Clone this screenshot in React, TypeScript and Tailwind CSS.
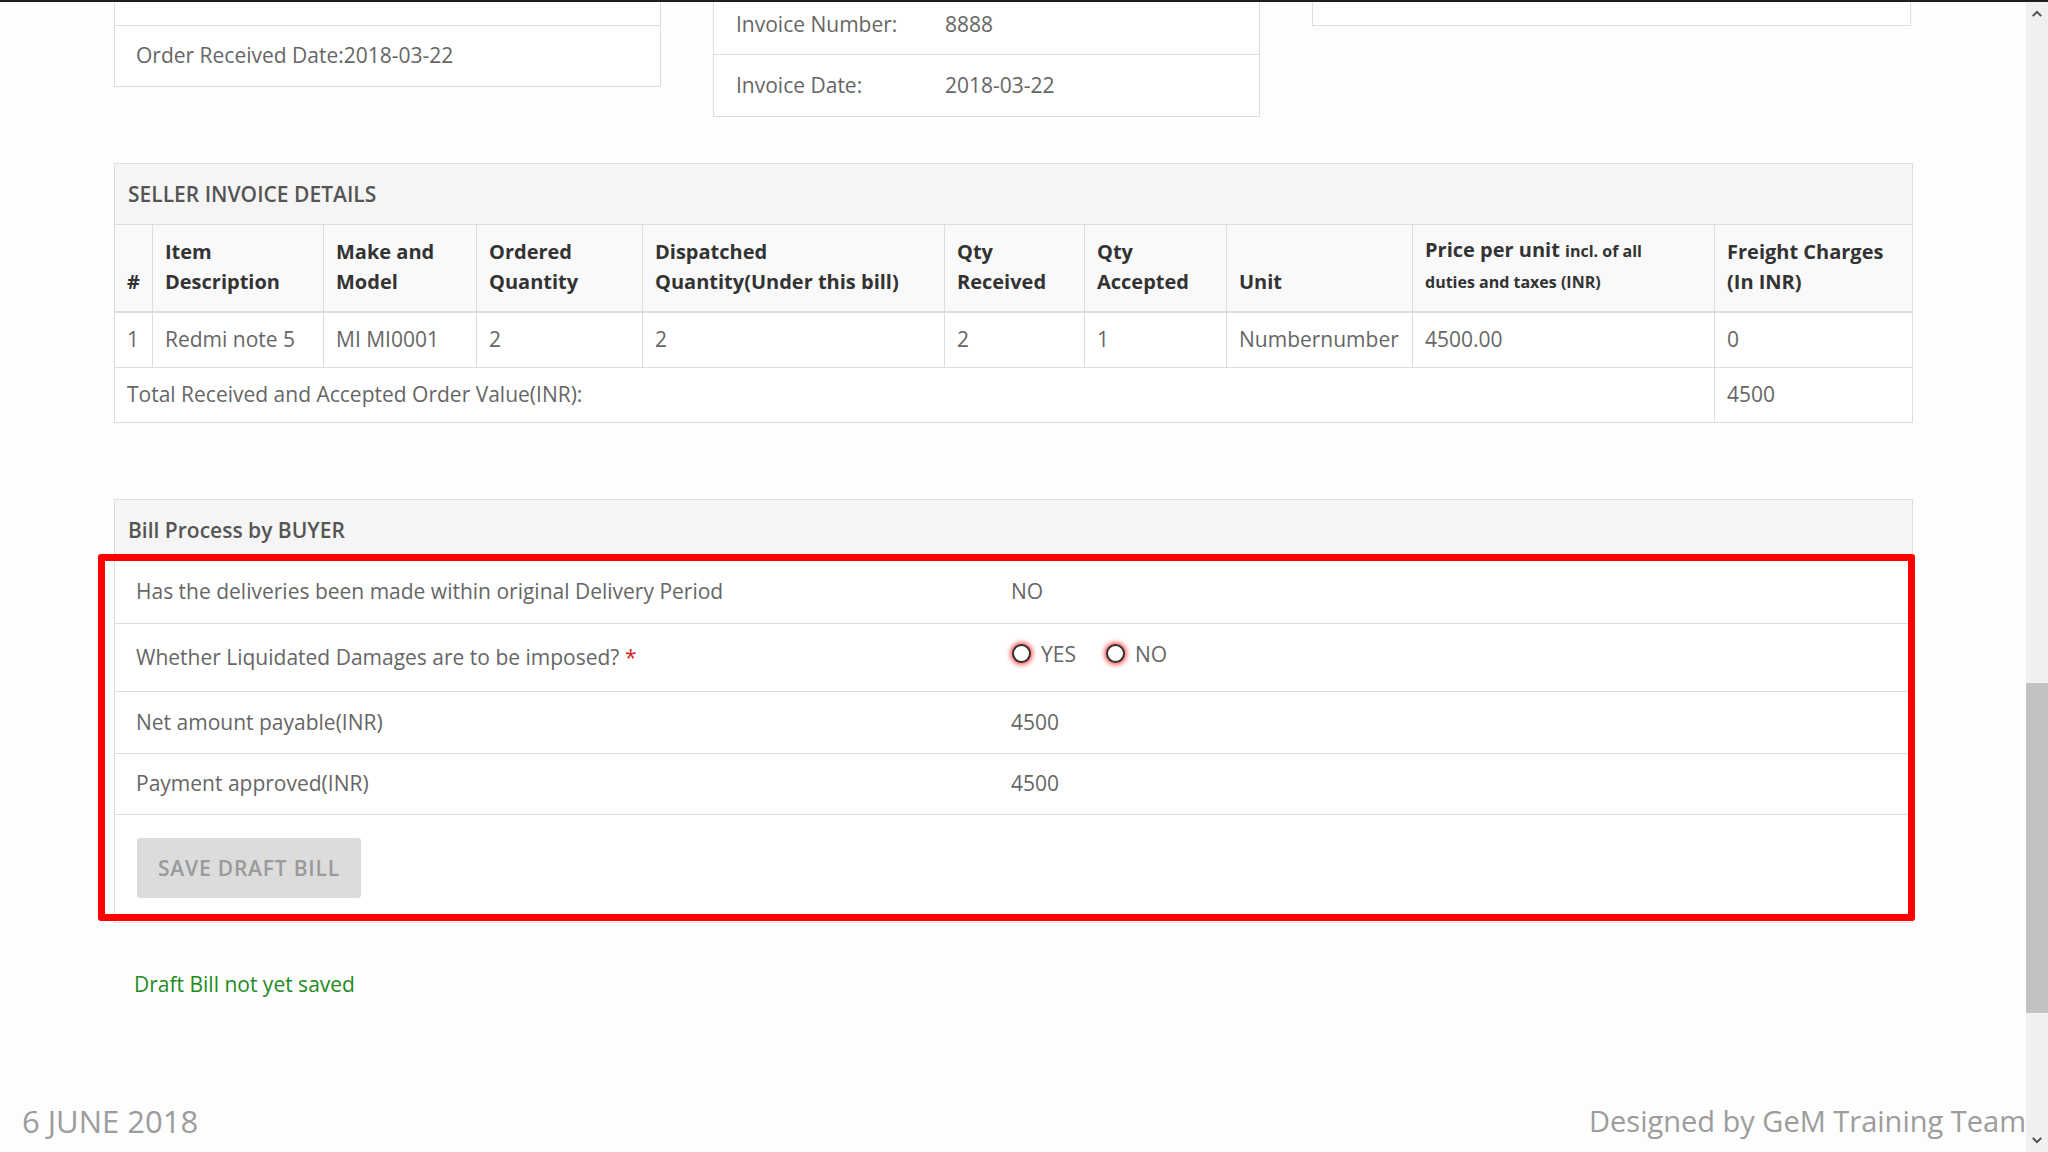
import React from 'react';

const cols = [38, 171, 153, 166, 302, 140, 142, 186, 302, 198];

function Radio({ label }: { label: string }) {
  return (
    <label className="flex items-center gap-[10px]">
      <span className="w-[19px] h-[19px] rounded-full border-2 border-[#333] bg-white shadow-[0_0_4px_2px_rgba(255,0,0,0.6)]" />
      <span className="text-[#666]">{label}</span>
    </label>
  );
}

function Scrollbar() {
  return (
    <div className="w-[23px] bg-[#f0f0f0] flex flex-col">
      <div className="h-[23px] flex items-center justify-center">
        <svg width="10" height="7" viewBox="0 0 10 7">
          <path d="M0 5.5 L5 0.5 L10 5.5 L8.5 6.8 L5 3.3 L1.5 6.8 Z" fill="#505050" />
        </svg>
      </div>
      <div className="flex-1 flex flex-col">
        <div className="mt-[658px] h-[330px] bg-[#c2c2c2]" />
      </div>
      <div className="h-[23px] flex items-center justify-center">
        <svg width="10" height="7" viewBox="0 0 10 7">
          <path d="M0 1.5 L5 6.5 L10 1.5 L8.5 0.2 L5 3.7 L1.5 0.2 Z" fill="#505050" />
        </svg>
      </div>
    </div>
  );
}

export default function App() {
  const th = 'border border-[#ddd] border-b-2 align-bottom px-[12px] pt-[10px] pb-[14px] text-left font-bold text-[20px] text-[#333]';
  const td = 'border border-[#ddd] px-[12px] pt-[11px] pb-[13px] text-[#666]';

  return (
    <div className="w-[2048px] h-[1152px] overflow-hidden bg-[#fdfdfd] flex flex-col font-['Open_Sans','Liberation_Sans',sans-serif] text-[21px] leading-[30px]">
      <div className="h-[2px] bg-[#1e1e1e]" />
      <div className="flex flex-1 min-h-0">
        <main className="flex-1 flex flex-col relative">
          <div className="pl-[114px] pr-[113px]">
            {/* top info boxes */}
            <div className="flex items-start gap-[52px]">
              <div className="w-[547px] border-x border-b border-[#ddd] bg-white">
                <div className="h-[24px] border-b border-[#ddd]" />
                <div className="h-[60px] flex items-center pl-[21px] pb-[2px] text-[#666]">Order Received Date:2018-03-22</div>
              </div>
              <div className="w-[547px] border-x border-b border-[#ddd] bg-white text-[#666]">
                <div className="h-[53px] border-b border-[#ddd] flex items-center pb-[9px] pl-[22px]">
                  <span className="w-[209px]">Invoice Number:</span>
                  <span>8888</span>
                </div>
                <div className="h-[61px] flex items-center pl-[22px] pb-[2px]">
                  <span className="w-[209px]">Invoice Date:</span>
                  <span>2018-03-22</span>
                </div>
              </div>
              <div className="w-[599px] h-[24px] border-x border-b border-[#ddd] bg-white" />
            </div>

            {/* seller invoice details */}
            <div className="mt-[46px]">
              <div className="h-[61px] border-x border-t border-[#ddd] bg-[#f5f5f5] flex items-center pl-[13px] pb-[1px] font-semibold text-[#555]">
                SELLER INVOICE DETAILS
              </div>
              <table className="w-full table-fixed border-collapse bg-white">
                <colgroup>
                  {cols.map((w, i) => (
                    <col key={i} style={{ width: w }} />
                  ))}
                </colgroup>
                <thead className="bg-[#f9f9f9]">
                  <tr>
                    <th className={`${th} px-[10px]`}>#</th>
                    <th className={th}>Item<br />Description</th>
                    <th className={th}>Make and<br />Model</th>
                    <th className={th}>Ordered<br />Quantity</th>
                    <th className={th}>Dispatched<br />Quantity(Under this bill)</th>
                    <th className={th}>Qty<br />Received</th>
                    <th className={th}>Qty<br />Accepted</th>
                    <th className={th}>Unit</th>
                    <th className={th}>
                      Price per unit <span className="text-[16px]">incl. of all</span>
                      <br />
                      <span className="text-[16px]">duties and taxes (INR)</span>
                    </th>
                    <th className={th}>Freight Charges<br />(In INR)</th>
                  </tr>
                </thead>
                <tbody>
                  <tr>
                    <td className={`${td} px-[10px]`}>1</td>
                    <td className={td}>Redmi note 5</td>
                    <td className={td}>MI MI0001</td>
                    <td className={td}>2</td>
                    <td className={td}>2</td>
                    <td className={td}>2</td>
                    <td className={td}>1</td>
                    <td className={`${td} px-[10px]`}>Numbernumber</td>
                    <td className={td}>4500.00</td>
                    <td className={td}>0</td>
                  </tr>
                  <tr>
                    <td className={`${td} px-[10px]`} colSpan={9}>Total Received and Accepted Order Value(INR):</td>
                    <td className={td}>4500</td>
                  </tr>
                </tbody>
              </table>
            </div>

            {/* bill process by buyer */}
            <div className="mt-[76px] border border-[#ddd] bg-white text-[#666]">
              <div className="h-[60px] bg-[#f5f5f5] flex items-center pl-[13px] pb-[1px] font-semibold text-[#555]">
                Bill Process by BUYER
              </div>
              <div className="h-[63px] border-t border-[#ddd] flex items-center pb-[3px]">
                <div className="w-[896px] pl-[21px]">Has the deliveries been made within original Delivery Period</div>
                <div>NO</div>
              </div>
              <div className="h-[68px] border-t border-[#ddd] flex items-center pb-[2px]">
                <div className="w-[896px] pl-[21px]">
                  Whether Liquidated Damages are to be imposed? <span className="text-[#e02020]">*</span>
                </div>
                <div className="flex items-center gap-[30px] pb-[6px] pl-[1px]">
                  <Radio label="YES" />
                  <Radio label="NO" />
                </div>
              </div>
              <div className="h-[62px] border-t border-[#ddd] flex items-center pb-[2px]">
                <div className="w-[896px] pl-[21px]">Net amount payable(INR)</div>
                <div>4500</div>
              </div>
              <div className="h-[61px] border-t border-[#ddd] flex items-center pb-[2px]">
                <div className="w-[896px] pl-[21px]">Payment approved(INR)</div>
                <div>4500</div>
              </div>
              <div className="h-[108px] border-t border-[#ddd] pt-[23px] pl-[22px]">
                <button className="w-[224px] h-[60px] rounded-[3px] bg-[#dcdcdc] text-[#9a9a9a] font-semibold text-[21px] tracking-[0.8px]">
                  SAVE DRAFT BILL
                </button>
              </div>
            </div>

            <div className="mt-[46px] pl-[20px] text-[#228b22]">Draft Bill not yet saved</div>
          </div>

          {/* annotation box */}
          <div className="absolute left-[98px] top-[552px] w-[1817px] h-[367px] border-[7px] border-[#ff0000] rounded-[3px] pointer-events-none" />

          <footer className="mt-auto pl-[22px] pb-[11px] flex justify-between items-end leading-[40px] text-[#9c9c9c]">
            <span className="text-[31px]">6 JUNE 2018</span>
            <span className="text-[29px]">Designed by GeM Training Team</span>
          </footer>
        </main>
        <Scrollbar />
      </div>
    </div>
  );
}
